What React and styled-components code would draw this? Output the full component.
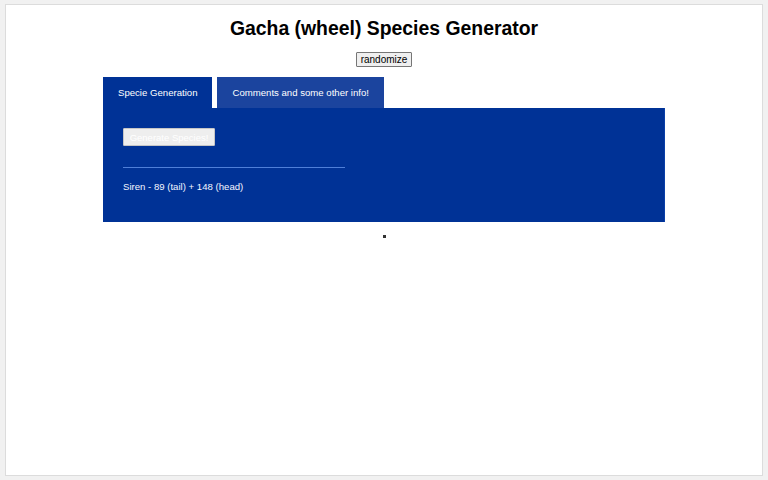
import React, { useState } from "react";
import styled, { createGlobalStyle } from "styled-components";

const GlobalStyle = createGlobalStyle`
  html, body {
    margin: 0;
    padding: 0;
    background: #f1f1f1;
  }
  body {
    font-family: "Liberation Sans", Arial, sans-serif;
  }
`;

const Page = styled.div`
  box-sizing: border-box;
  height: 480px;
  padding: 4px 5px 4px 5px;
`;

const Card = styled.div`
  box-sizing: border-box;
  height: 472px;
  background: #fff;
  border: 1px solid #dcdcdc;
  display: flex;
  flex-direction: column;
  align-items: center;
`;

const Title = styled.h1`
  margin: 12px 0 0;
  font-size: 19.4px;
  line-height: 22px;
  font-weight: bold;
  color: #000;
`;

const Randomize = styled.button`
  display: block;
  margin-top: 13px;
  font-family: "Liberation Sans", Arial, sans-serif;
  font-size: 10px;
  line-height: 11px;
  padding: 1px 4px;
  background: #efefef;
  border: 1px solid #767676;
  border-radius: 1px;
  color: #000;
`;

const Tabs = styled.div`
  margin-top: 10px;
  width: 562px;
`;

const TabBar = styled.div`
  display: flex;
  gap: 5px;
`;

const Tab = styled.div`
  box-sizing: border-box;
  height: 31px;
  padding: 0 15px;
  display: flex;
  align-items: center;
  font-size: 9.6px;
  color: #fff;
  background: ${(p) => (p.$active ? "#003296" : "#1b449e")};
  cursor: pointer;
`;

const Panel = styled.div`
  box-sizing: border-box;
  height: 114px;
  background: #003296;
  border-right: 1px solid #0a3fa8;
  padding: 20px 20px 0;
  color: #fff;
`;

const Generate = styled.button`
  display: block;
  font-family: "Liberation Sans", Arial, sans-serif;
  font-size: 9.5px;
  height: 18px;
  width: 92px;
  padding: 0;
  background: #eeeeee;
  color: #ffffff;
  border: 1px solid #c6c6c6;
  border-radius: 1px;
`;

const Rule = styled.div`
  margin-top: 21px;
  width: 222px;
  height: 1px;
  background: #4f7fd8;
`;

const Result = styled.div`
  margin-top: 13px;
  font-size: 9.6px;
  line-height: 12px;
  color: #f4f6ff;
`;

const Star = styled.div`
  margin-top: 13px;
  width: 3px;
  height: 3px;
  background: #333;
`;

export default function App() {
  const [tab, setTab] = useState(0);
  return (
    <>
      <GlobalStyle />
      <Page>
        <Card>
          <Title>Gacha (wheel) Species Generator</Title>
          <Randomize>randomize</Randomize>
          <Tabs>
            <TabBar>
              <Tab $active={tab === 0} onClick={() => setTab(0)}>
                Specie Generation
              </Tab>
              <Tab $active={tab === 1} onClick={() => setTab(1)}>
                Comments and some other info!
              </Tab>
            </TabBar>
            <Panel>
              <Generate disabled>Generate Species!</Generate>
              <Rule />
              <Result>Siren - 89 (tail) + 148 (head)</Result>
            </Panel>
          </Tabs>
          <Star />
        </Card>
      </Page>
    </>
  );
}
